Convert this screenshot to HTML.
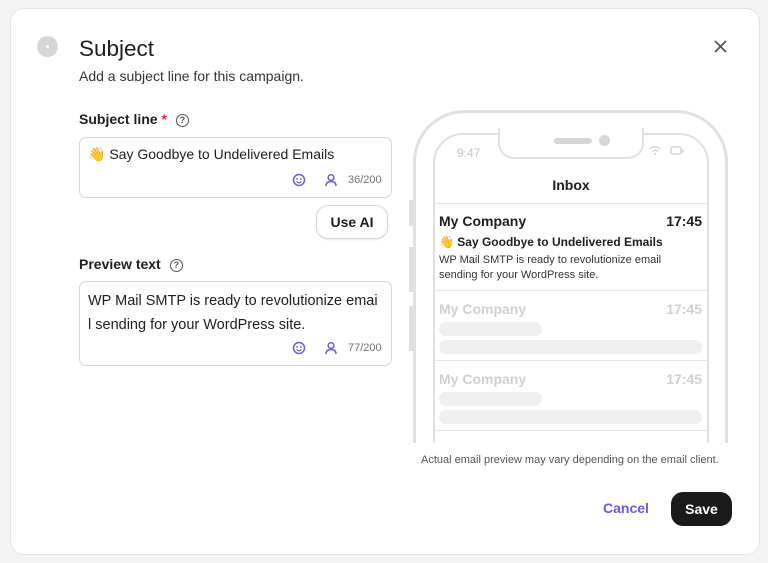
<!DOCTYPE html>
<html><head><style>
*{box-sizing:border-box;margin:0;padding:0}
body{width:768px;height:563px;background:#f4f4f5;font-family:"Liberation Sans","Noto Sans CJK JP",sans-serif;color:#1e1e1e;position:relative;overflow:hidden}
.card{position:absolute;left:10px;top:8px;width:750px;height:547px;background:#fff;border:1px solid #e4e4e4;border-radius:14px}
.a{position:absolute}
.box{position:absolute;left:79px;width:313px;border:1px solid #d6d6d6;border-radius:7px;background:#fff}
.lbl{position:absolute;left:79px;font-weight:bold;font-size:14px}
.q{display:inline-block;width:13px;height:13px;border:1.5px solid #555;border-radius:50%;font-size:9px;text-align:center;line-height:10px;font-weight:bold;vertical-align:1px;margin-left:9px;color:#555}
.cnt{font-size:11px;color:#777}
.row{position:absolute;left:434px;width:274px;border-top:1px solid #e6e6e6}
.g{color:#d0d0d0;font-weight:bold;font-size:14px}
.pill{position:absolute;background:#efefef;border-radius:8px;height:14px}
</style></head><body>
<div class="card"></div>
<div class="a" style="left:37px;top:36px;width:21px;height:21px;border-radius:50%;background:#d6d6d6"><div class="a" style="left:9px;top:9px;width:3px;height:3px;border-radius:50%;background:#fff"></div></div>
<div class="a" style="left:79px;top:36px;font-size:22.5px">Subject</div>
<div class="a" style="left:79px;top:68px;font-size:14px;color:#333">Add a subject line for this campaign.</div>
<svg class="a" style="left:713px;top:39px" width="15" height="15"><path d="M2 2L13 13M13 2L2 13" stroke="#555" stroke-width="1.8"/></svg>

<div class="lbl" style="top:111px">Subject line <span style="color:#e24">*</span><span class="q">?</span></div>
<div class="box" style="top:137px;height:61px">
 <div class="a" style="left:8px;top:8px;font-size:14px">👋 Say Goodbye to Undelivered Emails</div>
 <svg class="a" style="left:212px;top:35px" width="14" height="14"><circle cx="7" cy="7" r="5.5" fill="none" stroke="#6a5ae0" stroke-width="1.5"/><circle cx="5" cy="6" r=".9" fill="#6a5ae0"/><circle cx="9" cy="6" r=".9" fill="#6a5ae0"/><path d="M4.5 8.5Q7 11 9.5 8.5" fill="none" stroke="#6a5ae0" stroke-width="1.2"/></svg>
 <svg class="a" style="left:244px;top:35px" width="14" height="14"><circle cx="7" cy="4.5" r="2.8" fill="none" stroke="#6a5ae0" stroke-width="1.5"/><path d="M2 13Q2 8.5 7 8.5Q12 8.5 12 13" fill="none" stroke="#6a5ae0" stroke-width="1.5"/></svg>
 <div class="a cnt" style="left:268px;top:36px">36/200</div>
</div>
<div class="a" style="left:316px;top:205px;width:72px;height:34px;border:1px solid #d6d6d6;border-radius:12px;font-weight:bold;font-size:14px;text-align:center;line-height:32px;box-shadow:0 1px 2px rgba(0,0,0,.08)">Use AI</div>

<div class="lbl" style="top:256px">Preview text<span class="q">?</span></div>
<div class="box" style="top:281px;height:85px">
 <div class="a" style="left:8px;top:7px;font-size:14.5px;line-height:24px;width:305px;white-space:nowrap">WP Mail SMTP is ready to revolutionize emai<br>l sending for your WordPress site.</div>
 <svg class="a" style="left:212px;top:59px" width="14" height="14"><circle cx="7" cy="7" r="5.5" fill="none" stroke="#6a5ae0" stroke-width="1.5"/><circle cx="5" cy="6" r=".9" fill="#6a5ae0"/><circle cx="9" cy="6" r=".9" fill="#6a5ae0"/><path d="M4.5 8.5Q7 11 9.5 8.5" fill="none" stroke="#6a5ae0" stroke-width="1.2"/></svg>
 <svg class="a" style="left:244px;top:59px" width="14" height="14"><circle cx="7" cy="4.5" r="2.8" fill="none" stroke="#6a5ae0" stroke-width="1.5"/><path d="M2 13Q2 8.5 7 8.5Q12 8.5 12 13" fill="none" stroke="#6a5ae0" stroke-width="1.5"/></svg>
 <div class="a cnt" style="left:268px;top:60px">77/200</div>
</div>

<!-- phone -->
<div class="a" style="left:400px;top:100px;width:340px;height:343px;overflow:hidden">
 <div class="a" style="left:13px;top:10px;width:315px;height:420px;border:3px solid #e0e0e0;border-radius:52px"></div>
 <div class="a" style="left:9px;top:100px;width:4px;height:26px;background:#e0e0e0"></div>
 <div class="a" style="left:9px;top:147px;width:4px;height:45px;background:#e0e0e0"></div>
 <div class="a" style="left:9px;top:206px;width:4px;height:45px;background:#e0e0e0"></div>
 <div class="a" style="left:33px;top:33px;width:276px;height:380px;border:2px solid #e0e0e0;border-radius:30px"></div>
 <div class="a" style="left:98px;top:28px;width:146px;height:31px;background:#fff;border:2px solid #e0e0e0;border-top:none;border-radius:0 0 16px 16px"></div>
 <div class="a" style="left:154px;top:38px;width:38px;height:6px;border-radius:3px;background:#d6d6d6"></div>
 <div class="a" style="left:199px;top:35px;width:11px;height:11px;border-radius:50%;background:#d6d6d6"></div>
 <div class="a" style="left:57px;top:46px;font-size:12px;color:#c8c8c8">9:47</div>
 <svg class="a" style="left:248px;top:45px" width="38" height="12"><path d="M2 4Q7 -0.5 12 4M4 6.5Q7 4 10 6.5" fill="none" stroke="#ccc" stroke-width="1.3"/><circle cx="7" cy="9" r="1" fill="#ccc"/><rect x="23" y="2" width="10" height="7" rx="2" fill="none" stroke="#ccc" stroke-width="1.3"/><rect x="34" y="4.5" width="1.5" height="3" fill="#ccc"/></svg>
</div>
<div class="a" style="left:434px;top:177px;width:274px;text-align:center;font-weight:bold;font-size:14px">Inbox</div>
<div class="row" style="top:203px;height:88px">
 <div class="a" style="left:5px;top:9px;font-weight:bold;font-size:14px">My Company</div>
 <div class="a" style="right:6px;top:9px;font-weight:bold;font-size:14px">17:45</div>
 <div class="a" style="left:5px;top:31px;font-weight:bold;font-size:12px">👋 Say Goodbye to Undelivered Emails</div>
 <div class="a" style="left:5px;top:49px;font-size:11px;line-height:15px;color:#333">WP Mail SMTP is ready to revolutionize email<br>sending for your WordPress site.</div>
</div>
<div class="row" style="top:290px;height:70px">
 <div class="a g" style="left:5px;top:10px">My Company</div><div class="a g" style="right:6px;top:10px">17:45</div>
 <div class="pill" style="left:5px;top:31px;width:103px"></div><div class="pill" style="left:5px;top:49px;width:263px"></div>
</div>
<div class="row" style="top:360px;height:70px">
 <div class="a g" style="left:5px;top:10px">My Company</div><div class="a g" style="right:6px;top:10px">17:45</div>
 <div class="pill" style="left:5px;top:31px;width:103px"></div><div class="pill" style="left:5px;top:49px;width:263px"></div>
</div>
<div class="row" style="top:430px;height:13px;overflow:hidden"></div>
<div class="a" style="left:421px;top:454px;font-size:11px;color:#555">Actual email preview may vary depending on the email client.</div>
<div class="a" style="left:603px;top:500px;font-size:14px;font-weight:bold;color:#6a5ae0">Cancel</div>
<div class="a" style="left:671px;top:492px;width:61px;height:34px;border-radius:12px;background:#1a1a1a;color:#fff;font-weight:bold;font-size:14px;text-align:center;line-height:34px">Save</div>
</body></html>
